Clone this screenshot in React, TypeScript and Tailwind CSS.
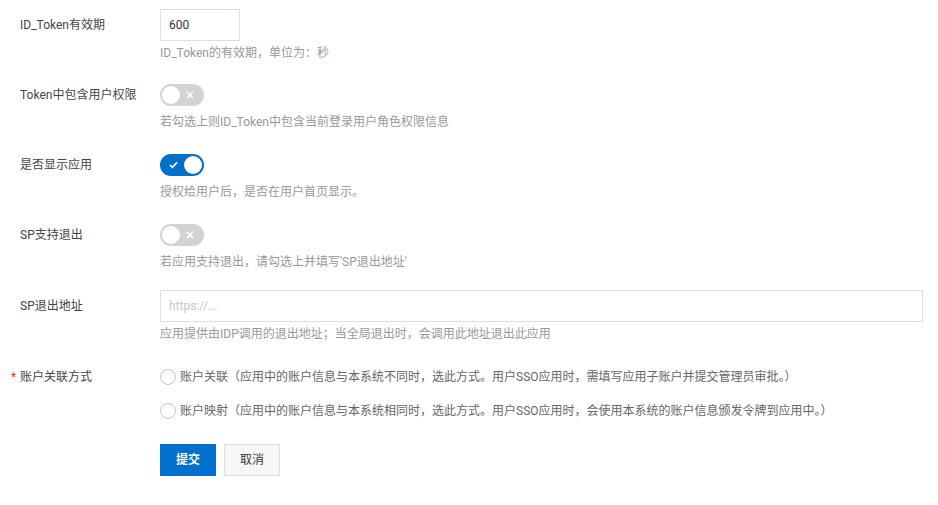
import React from "react";

const font = { fontFamily: '"Roboto", "Noto Sans CJK SC", sans-serif' };

function Switch({ on }: { on?: boolean }) {
  return (
    <span
      className={
        "relative flex h-[22px] w-[44px] rounded-full " +
        (on ? "bg-[#0070cc]" : "bg-[#d3d3d3]")
      }
    >
      {on ? (
        <svg className="absolute left-[9px] top-[7px]" width="9" height="8" viewBox="0 0 9 8">
          <path d="M1 4.2 L3.4 6.4 L8 1.4" fill="none" stroke="#fff" strokeWidth="1.6" />
        </svg>
      ) : (
        <svg className="absolute right-[10px] top-[7px]" width="8" height="8" viewBox="0 0 8 8">
          <path d="M1 1 L7 7 M7 1 L1 7" fill="none" stroke="#fff" strokeWidth="1.6" />
        </svg>
      )}
      <span
        className={
          "absolute top-[2px] h-[18px] w-[18px] rounded-full bg-white " +
          (on ? "left-[24px]" : "left-[2px]")
        }
      />
    </span>
  );
}

function Row({
  label,
  required,
  help,
  className,
  labelClass,
  helpClass,
  children,
}: {
  label: string;
  required?: boolean;
  help?: string;
  className?: string;
  labelClass?: string;
  helpClass?: string;
  children: React.ReactNode;
}) {
  return (
    <div className={"flex " + (className ?? "")}>
      <div className={"relative w-[160px] shrink-0 pl-5 text-[12px] text-[#444] " + (labelClass ?? "")}>
        {label}
        {required ? <span className="absolute left-[11px] top-0 text-[#ff3000]">*</span> : null}
      </div>
      <div className="min-w-0 flex-1">
        <div className="flex">{children}</div>
        {help ? (
          <p className={"text-[12px] leading-4 text-[#999] " + (helpClass ?? "mt-1")}>{help}</p>
        ) : null}
      </div>
    </div>
  );
}

function Radio({ text }: { text: string }) {
  return (
    <label className="flex h-[28px] items-center text-[12px] text-[#666]">
      <span className="mr-1 h-4 w-4 rounded-full border border-[#c4c6cf] bg-white" />
      {text}
    </label>
  );
}

export default function App() {
  return (
    <div className="h-[505px] w-[938px] overflow-hidden bg-white pt-[9px]" style={font}>
      <Row label="ID_Token有效期" help="ID_Token的有效期，单位为：秒" labelClass="leading-8">
        <div className="flex h-8 w-[80px] items-center border border-[#dcdee3] px-2 text-[12px] text-[#333]">600</div>
      </Row>

      <Row
        label="Token中包含用户权限"
        help="若勾选上则ID_Token中包含当前登录用户角色权限信息"
        className="mt-[23px]"
        labelClass="leading-[22px]"
        helpClass="mt-2"
      >
        <Switch />
      </Row>

      <Row
        label="是否显示应用"
        help="授权给用户后，是否在用户首页显示。"
        className="mt-6"
        labelClass="leading-[22px]"
        helpClass="mt-2"
      >
        <Switch on />
      </Row>

      <Row
        label="SP支持退出"
        help="若应用支持退出，请勾选上并填写'SP退出地址'"
        className="mt-6"
        labelClass="leading-[22px]"
        helpClass="mt-2"
      >
        <Switch />
      </Row>

      <Row
        label="SP退出地址"
        help="应用提供由IDP调用的退出地址；当全局退出时，会调用此地址退出此应用"
        className="mt-5 pr-[15px]"
        labelClass="leading-8"
      >
        <div className="flex h-8 w-full items-center border border-[#dcdee3] px-2 text-[12px] text-[#c5c8ce]">https://...</div>
      </Row>

      <Row label="账户关联方式" required className="mt-[21px]" labelClass="leading-[28px]">
        <div className="flex flex-col gap-[6px]">
          <Radio text="账户关联（应用中的账户信息与本系统不同时，选此方式。用户SSO应用时，需填写应用子账户并提交管理员审批。）" />
          <Radio text="账户映射（应用中的账户信息与本系统相同时，选此方式。用户SSO应用时，会使用本系统的账户信息颁发令牌到应用中。）" />
        </div>
      </Row>

      <div className="mt-[19px] flex gap-2 pl-[160px]">
        <button className="h-8 w-14 bg-[#0070cc] text-[12px] font-bold text-white">提交</button>
        <button className="h-8 w-14 border border-[#dcdee3] bg-[#f7f7f7] text-[12px] text-[#333]">取消</button>
      </div>
    </div>
  );
}
